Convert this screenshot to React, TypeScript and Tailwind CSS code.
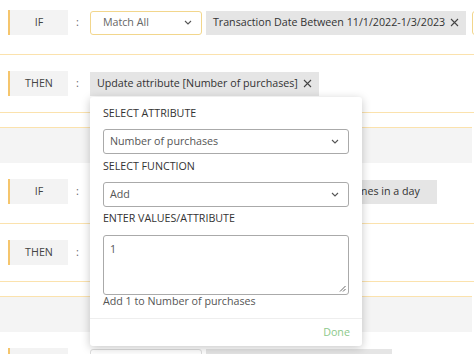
import type { ReactNode } from "react";

function Chevron({ className = "" }: { className?: string }) {
  return (
    <svg width="8" height="5" viewBox="0 0 8 5" className={className} fill="none">
      <path d="M1 1l3 3 3-3" stroke="#555" strokeWidth="1.1" />
    </svg>
  );
}

function Close() {
  return (
    <svg width="9" height="9" viewBox="0 0 9 9" className="ml-[5px]" fill="none">
      <path d="M1 1l7 7M8 1L1 8" stroke="#444" strokeWidth="1.1" />
    </svg>
  );
}

function Label({ text }: { text: string }) {
  return (
    <div className="flex h-[25px] w-[60px] shrink-0 items-center justify-center border-l-2 border-[#f5c56c] bg-[#f3f3f3] text-[10.7px] text-[#444]">
      {text}
    </div>
  );
}

function Tag({ children, className = "" }: { children: ReactNode; className?: string }) {
  return (
    <div className={`flex h-[24px] shrink-0 items-center whitespace-nowrap bg-[#e5e5e5] px-[7px] text-[10.7px] text-[#333] ${className}`}>
      {children}
    </div>
  );
}

function MatchAll({ border = "border-[#f2d68c]" }: { border?: string }) {
  return (
    <div className={`flex h-[24px] w-[112px] shrink-0 items-center justify-between rounded-[3px] border ${border} bg-white pl-[12px] pr-[9px] text-[10.7px] text-[#666]`}>
      <span>Match All</span>
      <Chevron />
    </div>
  );
}

function Row({ label, children, className }: { label: string; children: ReactNode; className: string }) {
  return (
    <div className={`flex items-center border-b border-[#fbe2ad] pl-[8px] ${className}`}>
      <Label text={label} />
      <span className="ml-[8px] mr-[11px] text-[11px] text-[#666]">:</span>
      {children}
    </div>
  );
}

function Popup() {
  return (
    <div className="absolute left-0 top-[25px] z-10 w-[272px] rounded-[3px] bg-white shadow-[0_2px_10px_rgba(0,0,0,0.22)]">
      <div className="px-[13px] pt-[8px] text-[10.7px]">
        <div className="flex h-[18px] items-center text-[#333]">SELECT ATTRIBUTE</div>
        <div className="mt-[6px] flex h-[25px] items-center justify-between rounded-[3px] border border-[#aaa] pl-[6px] pr-[9px] text-[#555]">
          <span>Number of purchases</span>
          <Chevron />
        </div>
        <div className="mt-[4px] flex h-[18px] items-center text-[#333]">SELECT FUNCTION</div>
        <div className="mt-[6px] flex h-[25px] items-center justify-between rounded-[3px] border border-[#aaa] pl-[6px] pr-[9px] text-[#555]">
          <span>Add</span>
          <Chevron />
        </div>
        <div className="mt-[3px] flex h-[18px] items-center text-[#333]">ENTER VALUES/ATTRIBUTE</div>
        <div className="relative mt-[7px] h-[60px] rounded-[3px] border border-[#aaa] px-[6px] pt-[5px] text-[#555]">
          1
          <svg width="7" height="7" viewBox="0 0 7 7" className="absolute bottom-[2px] right-[2px]">
            <path d="M1 6.5L6.5 1M4 6.5L6.5 4" stroke="#666" strokeWidth="1" />
          </svg>
        </div>
        <div className="flex h-[14px] items-center text-[#555]">Add 1 to Number of purchases</div>
      </div>
      <div className="mt-[9px] flex h-[28px] items-center justify-end border-t border-[#eee] pr-[12px] text-[10.7px] text-[#8cc98a]">
        Done
      </div>
    </div>
  );
}

function Rule({ ifTag, thenTag, popup, selectBorder }: { ifTag: ReactNode; thenTag: ReactNode; popup?: boolean; selectBorder?: string }) {
  return (
    <div>
      <Row label="IF" className="pb-[19px] pt-[16px]">
        <MatchAll border={selectBorder} />
        <div className="ml-[4px] flex gap-[6px]">{ifTag}</div>
      </Row>
      <Row label="THEN" className="pb-[16px] pt-[16px]">
        <div className="relative">
          {thenTag}
          {popup && <Popup />}
        </div>
      </Row>
      <div className="h-[14px]" />
      <div className="mr-[2px] h-[36px] border-t border-[#fbe2ad] bg-[#f4f4f4]" />
    </div>
  );
}

export default function App() {
  return (
    <div className="h-[354px] w-[474px] overflow-hidden bg-white font-['Open_Sans',sans-serif]">
      <div className="-mt-[6px]">
        <Rule
          popup
          ifTag={
            <>
              <Tag>
                Transaction Date Between 11/1/2022-1/3/2023
                <Close />
              </Tag>
              <div className="flex h-[24px] w-[30px] shrink-0 items-center justify-center rounded-[3px] border border-[#f2d68c] text-[11px] text-[#666]">
                +
              </div>
            </>
          }
          thenTag={
            <Tag>
              Update attribute [Number of purchases]
              <Close />
            </Tag>
          }
        />
        <Rule
          ifTag={<Tag className="w-[231px] justify-end pr-[17px]">Purchase more than 3 times in a day</Tag>}
          thenTag={<Tag>Update attribute [Points]</Tag>}
        />
        <Rule
          selectBorder="border-[#ddd]"
          ifTag={<Tag className="w-[186px]">Store visit</Tag>}
          thenTag={<Tag>Send coupon</Tag>}
        />
      </div>
    </div>
  );
}
